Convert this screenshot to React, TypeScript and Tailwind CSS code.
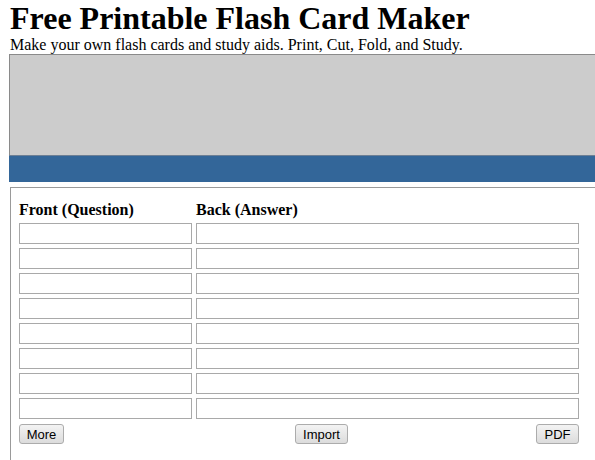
import React from "react"

const rows = Array.from({ length: 8 }, (_, i) => i)

const Button = ({ label, className }: { label: string; className: string }) => (
  <button
    type="button"
    className={`h-[20px] shrink-0 rounded-[3px] border border-[#acacac] bg-linear-to-b from-[#f3f3f3] to-[#dcdcdc] text-[13px] leading-none text-black ${className}`}
    style={{ fontFamily: "'Liberation Sans', Arial, sans-serif" }}
  >
    {label}
  </button>
)

export default function App() {
  return (
    <div
      className="w-[595px] h-[460px] overflow-hidden bg-white pl-[9px] text-black"
      style={{ fontFamily: "'Liberation Serif', 'Times New Roman', serif" }}
    >
      {/* Header */}
      <h1 className="ml-[1px] text-[32px] font-bold leading-[36px]">Free Printable Flash Card Maker</h1>
      <p className="ml-[1px] text-[16px] leading-[18px]">
        Make your own flash cards and study aids. Print, Cut, Fold, and Study.
      </p>

      {/* Ad placeholder + nav bar */}
      <div className="h-[101px] w-[760px] border border-b-0 border-[#8a8a8a] bg-[#cccccc]" />
      <div className="h-[27px] w-[760px] border-t border-[#6d7f94] bg-[#336699]" />

      {/* Card editor */}
      <div className="ml-[1px] mt-[5px] h-[400px] w-[760px] border border-[#9a9a9a] pl-[8px] pt-[13px]">
        <div className="flex gap-[4px] text-[16px] font-bold leading-[normal]">
          <div className="w-[173px]">Front (Question)</div>
          <div className="w-[383px]">Back (Answer)</div>
        </div>

        <div className="mt-[4px] flex flex-col gap-[4px]">
          {rows.map((r) => (
            <div key={r} className="flex gap-[4px]">
              <input className="h-[21px] w-[173px] border border-[#a9a9a9] bg-white outline-none" />
              <input className="h-[21px] w-[383px] border border-[#a9a9a9] bg-white outline-none" />
            </div>
          ))}
        </div>

        <div className="mt-[5px] flex w-[560px]">
          <Button label="More" className="w-[45px]" />
          <Button label="Import" className="ml-[231px] w-[53px]" />
          <Button label="PDF" className="ml-auto w-[43px]" />
        </div>
      </div>
    </div>
  )
}
